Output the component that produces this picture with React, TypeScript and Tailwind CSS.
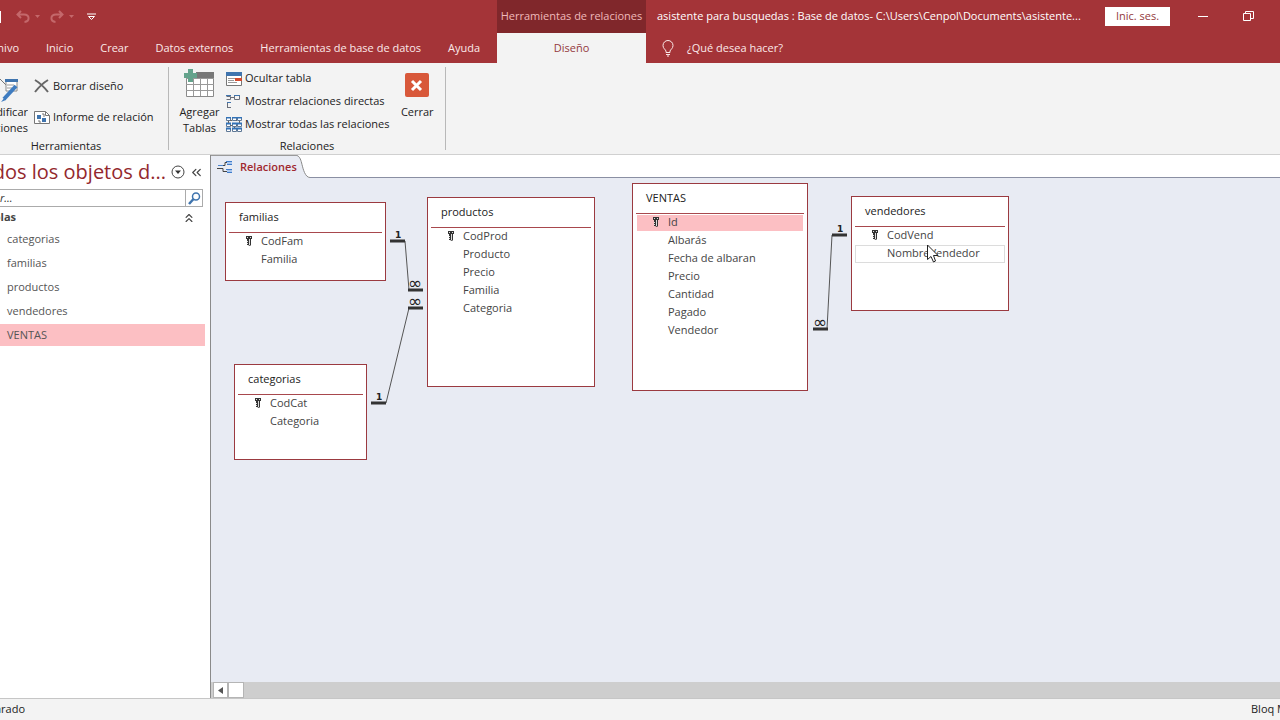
import React from "react";
import { ChevronsLeft, ChevronsUp } from "lucide-react";

type Field = { name: string; pk?: boolean; state?: "selected" | "hover" };

type DbTable = {
  name: string;
  place: string;
  fields: Field[];
};

const tables: DbTable[] = [
  {
    name: "familias",
    place: "left-[14px] top-[24px] w-[161px] h-[79px]",
    fields: [{ name: "CodFam", pk: true }, { name: "Familia" }],
  },
  {
    name: "categorias",
    place: "left-[23px] top-[186px] w-[133px] h-[96px]",
    fields: [{ name: "CodCat", pk: true }, { name: "Categoria" }],
  },
  {
    name: "productos",
    place: "left-[216px] top-[19px] w-[168px] h-[190px]",
    fields: [
      { name: "CodProd", pk: true },
      { name: "Producto" },
      { name: "Precio" },
      { name: "Familia" },
      { name: "Categoria" },
    ],
  },
  {
    name: "VENTAS",
    place: "left-[421px] top-[5px] w-[176px] h-[208px]",
    fields: [
      { name: "Id", pk: true, state: "selected" },
      { name: "Albarás" },
      { name: "Fecha de albaran" },
      { name: "Precio" },
      { name: "Cantidad" },
      { name: "Pagado" },
      { name: "Vendedor" },
    ],
  },
  {
    name: "vendedores",
    place: "left-[640px] top-[18px] w-[158px] h-[115px]",
    fields: [
      { name: "CodVend", pk: true },
      { name: "NombreVendedor", state: "hover" },
    ],
  },
];

// "one" and "many" are the thick stubs next to each table, in canvas coordinates
const relations = [
  { id: "familias-productos", one: [179, 63], many: [197, 112], line: "M194 63 L198 112" },
  { id: "categorias-productos", one: [160, 225], many: [197, 130], line: "M175 225 L198 130" },
  { id: "vendedores-ventas", one: [621, 57], many: [602, 151], line: "M621 57 L616 151" },
];

const navItems = ["categorias", "familias", "productos", "vendedores", "VENTAS"];

const menuTabs = ["Inicio", "Crear", "Datos externos", "Herramientas de base de datos", "Ayuda"];

function KeyIcon() {
  return (
    <svg width="6" height="10" viewBox="0 0 6 10" aria-hidden="true">
      <path d="M0 0h6v3H5v6L4 10 2 9H1V3H0z" fill="#333" />
      <path d="M1 1h1v1H1zM4 1h1v1H4zM3 3h1v6H3zM1 5h1v1H1zM1 7h1v1H1z" fill="#ddd" />
    </svg>
  );
}

function UndoIcon({ flip = false }: { flip?: boolean }) {
  return (
    <svg width="14" height="14" viewBox="0 0 14 14" fill="none" stroke="#c4686b" strokeWidth="2" className={flip ? "-scale-x-100" : ""} aria-hidden="true">
      <path d="M5 1L1.5 4.5 5 8M2 4.5h6c6 0 6 7 .5 7.500" />
    </svg>
  );
}

function SmallCaret() {
  return (
    <svg width="5" height="3" viewBox="0 0 5 3" aria-hidden="true">
      <path d="M0 0h5L2.500 3z" fill="#c4686b" />
    </svg>
  );
}

function EditRelationsIcon() {
  return (
    <svg width="34" height="26" viewBox="0 0 34 26" fill="none" aria-hidden="true">
      <path d="M16 1l6 6" stroke="#777" />
      <path d="M22 3h11v10h-11z" fill="#fff" stroke="#8a8a8a" />
      <path d="M21 1h13v3H21z" fill="#3f74ae" />
      <path d="M23 7h7M23 10h5" stroke="#999" />
      <path d="M32 8L20 21" stroke="#3f7cc0" strokeWidth="4" />
      <path d="M21 19l-4 5 5-2z" fill="#3f7cc0" />
    </svg>
  );
}

function ReportIcon() {
  return (
    <svg width="16" height="15" viewBox="0 0 16 15" fill="none" aria-hidden="true">
      <path d="M.5 1.500h11l4 4v8H.5z" fill="#fff" stroke="#777" />
      <path d="M11.500 1.500v4h4" stroke="#777" />
      <path d="M3 5h4v4H3zM8 8h4v4H8z" fill="#3f74ae" />
      <path d="M8 4h2v3M5 10v2h2" stroke="#777" />
    </svg>
  );
}

function AddTableIcon() {
  return (
    <svg width="31" height="29" viewBox="0 0 31 29" fill="none" aria-hidden="true">
      <path d="M2.500 4.500h27v23h-27z" fill="#fff" stroke="#8a8a8a" />
      <path d="M12 3h18v6H12z" fill="#777" />
      <path d="M2 9.500h28M2 15.500h28M2 21.500h28M9.500 9v18M16.500 9v18M23.500 9v18" stroke="#999" />
      <path d="M4 0h5v4h4v5H9v4H4V9H0V4h4z" fill="#64a38c" />
    </svg>
  );
}

function HideTableIcon() {
  return (
    <svg width="16" height="14" viewBox="0 0 16 14" fill="none" aria-hidden="true">
      <path d="M.5.5h15v13H.5z" fill="#fff" stroke="#777" />
      <path d="M0 0h16v4H0z" fill="#3f74ae" />
      <path d="M2 6.500h8M2 8.500h6M2 10.500h9" stroke="#999" />
      <path d="M9 6h7v3H9z" fill="#d3492d" />
    </svg>
  );
}

function DirectIcon() {
  return (
    <svg width="16" height="16" viewBox="0 0 16 16" fill="none" stroke="#6a6f7a" aria-hidden="true">
      <path d="M.5 2.500h4v3h-4M8.500 1.500h5v4h-5zM4.500 3.500h4M4.500 8.500h-3v5h3M1 13.500h4" />
      <path d="M0 1.500h5M8 1.500h6M1 8.500h4" stroke="#3f74ae" />
    </svg>
  );
}

function AllRelationsIcon() {
  return (
    <svg width="16" height="16" viewBox="0 0 16 16" fill="none" aria-hidden="true">
      {[0, 6, 11].map((x) =>
        [0, 6, 11].map((y) => (
          <g key={`${x}-${y}`}>
            <path d={`M${x + 0.5} ${y + 0.5}h4v3h-4z`} fill="#fff" stroke="#5f7896" />
            <path d={`M${x} ${y + 0.5}h5`} stroke="#3273b8" strokeWidth="2" />
          </g>
        ))
      )}
      <path d="M4 3.500h2M10 3.500h1M4 8.500h2M10 8.500h1M2.500 4v2M13.500 4v2M8.500 10v1" stroke="#666" />
    </svg>
  );
}

function RelationTabIcon() {
  return (
    <svg width="16" height="14" viewBox="0 0 16 14" fill="none" aria-hidden="true">
      <path d="M0 8.500h6v3h4M6 5.500h2v-3h2" stroke="#444" />
      <path d="M1 5.500h5" stroke="#4c86cf" />
      <path d="M10 1h5v4h-5zM10 9h5v4h-5z" fill="#a9c6ee" />
      <path d="M9 1.500h6M10 4.500h5M9 9.500h6M10 12.500h5" stroke="#3f7ccb" />
    </svg>
  );
}

function TableBox({ table }: { table: DbTable }) {
  return (
    <section className={`absolute border border-[#9b3a40] bg-white px-[3px] ${table.place}`}>
      <h3 className="h-[30px] border-b border-[#a8484d] pl-[10px] text-[11px] leading-[28px] text-[#222]">
        {table.name}
      </h3>
      <ul>
        {table.fields.map((field) => (
          <li
            key={field.name}
            className={`flex h-[18px] items-center border pb-[2px] text-[11px] text-[#444] ${
              field.state === "selected"
                ? "border-white bg-[#fcbfc3]"
                : field.state === "hover"
                ? "border-[#dcdcdc]"
                : "border-transparent"
            }`}
          >
            <span className="flex w-[31px] shrink-0 justify-center pl-[7px]">{field.pk && <KeyIcon />}</span>
            <span className="whitespace-nowrap">{field.name}</span>
          </li>
        ))}
      </ul>
    </section>
  );
}

function Header() {
  return (
    <header className="flex h-[63px] shrink-0 overflow-hidden bg-[#a43438] text-[11px] text-[#fbe9e9]">
      <div className="flex w-[497px] shrink-0 flex-col">
        <div className="flex h-[33px] items-center">
          <span className="h-3 w-px bg-white" />
          <button aria-label="Deshacer" className="ml-[15px] flex items-center gap-[5px]">
            <UndoIcon />
            <SmallCaret />
          </button>
          <button aria-label="Rehacer" className="ml-[10px] flex items-center gap-[5px]">
            <UndoIcon flip />
            <SmallCaret />
          </button>
          <button aria-label="Personalizar barra" className="ml-[13px]">
            <svg width="9" height="8" viewBox="0 0 9 8" fill="none" stroke="#fff" aria-hidden="true">
              <path d="M0 1h9M1.500 3.500h6L4.500 6.500z" />
            </svg>
          </button>
        </div>
        <nav className="flex h-[30px] items-center gap-[27px] whitespace-nowrap">
          <button className="flex w-[19px] justify-end overflow-hidden">Archivo</button>
          {menuTabs.map((tab) => (
            <button key={tab}>{tab}</button>
          ))}
        </nav>
      </div>
      <div className="flex w-[149px] shrink-0 flex-col">
        <div className="flex h-[33px] items-center justify-center whitespace-nowrap bg-[#80272b] text-[#efb9ba]">
          Herramientas de relaciones
        </div>
        <button className="h-[30px] bg-[#f3f3f3] text-[#93393d]">Diseño</button>
      </div>
      <div className="flex min-w-0 flex-1 flex-col">
        <div className="flex h-[33px] items-center pl-[11px]">
          <h1 className="w-[440px] whitespace-nowrap text-white">
            asistente para busquedas : Base de datos- C:\Users\Cenpol\Documents\asistente...
          </h1>
          <button className="ml-[8px] h-[19px] w-[65px] shrink-0 bg-white text-[#93393d]">Inic. ses.</button>
          <button aria-label="Minimizar" className="ml-auto flex h-5 w-[20px] items-center justify-center">
            <span className="h-px w-[10px] bg-white" />
          </button>
          <button aria-label="Restaurar" className="mr-[26px] ml-[30px]">
            <svg width="11" height="11" viewBox="0 0 11 11" fill="none" stroke="#fff" aria-hidden="true">
              <path d="M.5 2.500h7v7h-7zM2.500 2.500v-2h8v7h-3" />
            </svg>
          </button>
        </div>
        <button className="flex h-[30px] items-center gap-[13px] pl-[16px]">
          <svg width="12" height="17" viewBox="0 0 12 17" fill="none" stroke="#fbe9e9" aria-hidden="true">
            <path d="M4 12.500V11C3.500 9.500 1 8.500 1 5.500a5 5 0 0 1 10 0C11 8.500 8.500 9.500 8 11v1.500zM4 14.500h4M5 16h2" />
          </svg>
          ¿Qué desea hacer?
        </button>
      </div>
    </header>
  );
}

function Ribbon() {
  return (
    <div className="flex h-[92px] shrink-0 border-b border-[#d0d0d0] bg-[#f3f3f3] text-[11px] text-[#222]">
      <section className="my-[4px] flex w-[169px] flex-col border-r border-[#b8b8b8]">
        <div className="flex flex-1">
          <button className="flex w-[28px] shrink-0 flex-col items-end overflow-hidden pt-[11px] leading-4">
            <span className="flex h-[26px] w-[28px] justify-end pr-[10px]">
              <span className="shrink-0">
                <EditRelationsIcon />
              </span>
            </span>
            <span>Modificar</span>
            <span>relaciones</span>
          </button>
          <div className="flex flex-col items-start gap-[7px] pt-[7px] pl-[6px]">
            <button className="flex h-6 items-center gap-[4px] whitespace-nowrap">
              <svg width="15" height="14" viewBox="0 0 15 14" fill="none" stroke="#666" strokeWidth="2" aria-hidden="true">
                <path d="M1 1c5 3 9 7 13 12M14 1C9 4 5 8 1 13" />
              </svg>
              Borrar diseño
            </button>
            <button className="flex h-6 items-center gap-[3px] whitespace-nowrap">
              <ReportIcon />
              Informe de relación
            </button>
          </div>
        </div>
        <h2 className="pt-[2px] pr-[36px] text-center leading-4">Herramientas</h2>
      </section>
      <section className="my-[4px] flex w-[277px] flex-col border-r border-[#b8b8b8]">
        <div className="flex flex-1">
          <button className="flex w-[57px] shrink-0 flex-col items-center pt-[2px] pl-[4px] leading-4">
            <AddTableIcon />
            <span className="mt-[6px]">Agregar</span>
            <span>Tablas</span>
          </button>
          <div className="flex flex-col">
            {[
              { icon: <HideTableIcon />, label: "Ocultar tabla" },
              { icon: <DirectIcon />, label: "Mostrar relaciones directas" },
              { icon: <AllRelationsIcon />, label: "Mostrar todas las relaciones" },
            ].map((cmd) => (
              <button key={cmd.label} className="flex h-[23px] items-center gap-[3px] whitespace-nowrap">
                {cmd.icon}
                {cmd.label}
              </button>
            ))}
          </div>
          <button className="ml-auto flex w-[56px] flex-col items-center pt-[6px] leading-4">
            <svg width="24" height="24" viewBox="0 0 24 24" aria-hidden="true">
              <rect width="24" height="24" rx="2" fill="#d8583a" />
              <path d="M7 8l9 9M16 8l-9 9" stroke="#fff" strokeWidth="3" />
            </svg>
            <span className="mt-[7px]">Cerrar</span>
          </button>
        </div>
        <h2 className="pt-[2px] text-center leading-4">Relaciones</h2>
      </section>
    </div>
  );
}

function NavPane() {
  return (
    <aside className="flex w-[211px] shrink-0 flex-col border-r border-[#8a8a8a] bg-white pr-[5px]">
      <div className="flex h-[34px] items-center">
        <h2 className="flex w-[166px] shrink-0 justify-end overflow-hidden text-[20px] whitespace-nowrap text-[#93282d]">
          Todos los objetos d...
        </h2>
        <button aria-label="Elegir categoría" className="ml-[5px]">
          <svg width="14" height="14" viewBox="0 0 14 14" fill="none" aria-hidden="true">
            <circle cx="7" cy="7" r="6" stroke="#444" />
            <path d="M4 5.500h6L7 9z" fill="#333" />
          </svg>
        </button>
        <button aria-label="Contraer panel" className="ml-[4px]">
          <ChevronsLeft size={15} strokeWidth={2} color="#444" />
        </button>
      </div>
      <div className="mr-[2px] flex h-[18px] border border-l-0 border-[#ababab]">
        <label className="flex min-w-0 flex-1 overflow-hidden">
          <span className="sr-only">Buscar</span>
          <input
            placeholder="r..."
            className="w-full bg-white text-[11px] text-[#333] italic outline-none placeholder:text-[#333]"
          />
        </label>
        <button aria-label="Buscar" className="flex w-[17px] items-center justify-center border-l border-[#ababab]">
          <svg width="13" height="13" viewBox="0 0 13 13" fill="none" stroke="#3f74ae" aria-hidden="true">
            <circle cx="8" cy="4.500" r="3.500" strokeWidth="1.500" />
            <path d="M5.500 7L1 12" strokeWidth="2.500" />
          </svg>
        </button>
      </div>
      <div className="flex h-[21px] items-center justify-between pr-[9px]">
        <h3 className="flex w-[16px] justify-end overflow-hidden text-[11px] font-bold text-[#444]">Tablas</h3>
        <ChevronsUp size={14} strokeWidth={2} color="#444" />
      </div>
      <ul>
        {navItems.map((item) => (
          <li key={item}>
            <button
              className={`mb-[2px] block h-[22px] w-full pl-[7px] text-left text-[11px] text-[#555] ${
                item === "VENTAS" ? "bg-[#fcbfc3]" : ""
              }`}
            >
              {item}
            </button>
          </li>
        ))}
      </ul>
    </aside>
  );
}

function Diagram() {
  return (
    <div className="relative flex-1 overflow-hidden bg-[#e8ebf3]">
      {tables.map((table) => (
        <TableBox key={table.name} table={table} />
      ))}
      <svg className="absolute top-0 left-0" width="820" height="300" fill="none" aria-hidden="true">
        {relations.map((rel) => (
          <g key={rel.id}>
            <path d={rel.line} stroke="#555" />
            <path d={`M${rel.one[0]} ${rel.one[1]}h15M${rel.many[0]} ${rel.many[1]}h15`} stroke="#333" strokeWidth="3" />
            <text x={rel.one[0] + 5} y={rel.one[1] - 3} fill="#222" className="font-['DejaVu_Sans',sans-serif] text-[9px] font-bold">
              1
            </text>
            <text x={rel.many[0]} y={rel.many[1] - 1} fill="#222" className="font-['DejaVu_Sans',sans-serif] text-[17px]">
              ∞
            </text>
          </g>
        ))}
      </svg>
      <svg className="absolute top-[66px] left-[716px]" width="12" height="20" viewBox="0 0 12 20" aria-hidden="true">
        <path d="M.5 1v14.500L4 12.500l2.500 5.500 2-1L6.500 11.500H11z" fill="#fff" stroke="#222" />
      </svg>
    </div>
  );
}

export default function App() {
  return (
    <div className="flex min-h-screen flex-col overflow-hidden bg-white font-['Open_Sans','Noto_Sans',sans-serif]">
      <Header />
      <Ribbon />
      <div className="flex flex-1">
        <NavPane />
        <main className="flex min-w-0 flex-1 flex-col">
          <div className="flex h-[23px] shrink-0">
            <button className="flex h-full items-center gap-[7px] border-t border-[#9a9a9a] bg-[#e8ebf3] pl-[6px] text-[11px] font-semibold text-[#a0282e]">
              <RelationTabIcon />
              Relaciones
            </button>
            <svg width="13" height="23" viewBox="0 0 13 23" fill="none" className="shrink-0" aria-hidden="true">
              <path d="M0 .5c3 1 4 5 5 9s3 13 8 13v.5H0z" fill="#e8ebf3" />
              <path d="M0 .5c3 1 4 5 5 9s3 13 8 13" stroke="#8a8a8a" />
            </svg>
            <div className="flex-1 border-b border-[#8a8fa3]" />
          </div>
          <Diagram />
          <div className="flex h-[16px] shrink-0 bg-[#cecece] pl-[2px]">
            <button aria-label="Desplazar a la izquierda" className="flex w-[15px] items-center justify-center border border-[#b5b5b5] bg-white">
              <svg width="5" height="7" viewBox="0 0 5 7" aria-hidden="true">
                <path d="M5 0v7L0 3.500z" fill="#555" />
              </svg>
            </button>
            <span className="w-[16px] border border-[#b5b5b5] bg-white" />
          </div>
        </main>
      </div>
      <footer className="flex h-[22px] shrink-0 items-center justify-between border-t border-[#c6c6c6] bg-[#f3f3f3] text-[11px] text-[#222]">
        <span className="flex w-[25px] justify-end overflow-hidden">Preparado</span>
        <span className="w-[29px] overflow-hidden whitespace-nowrap">Bloq Mayús</span>
      </footer>
    </div>
  );
}
